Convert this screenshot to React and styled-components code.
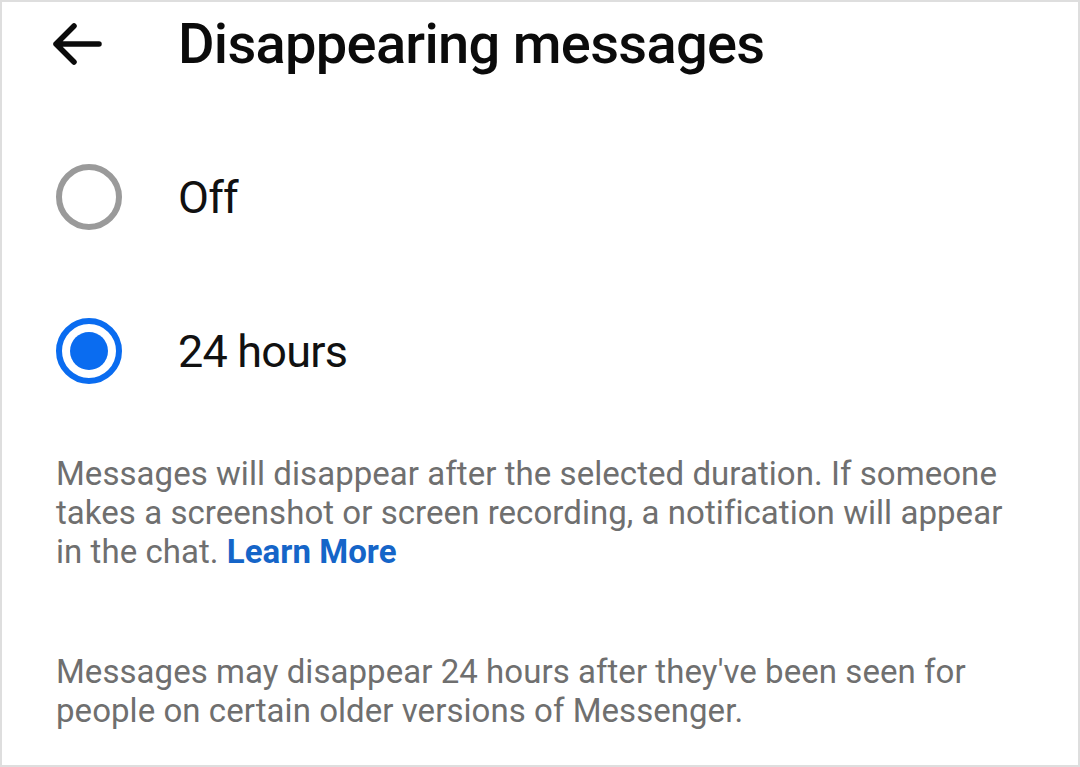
import styled, { createGlobalStyle } from 'styled-components';

const GlobalStyle = createGlobalStyle`
  html, body {
    margin: 0;
    padding: 0;
    background: #ffffff;
  }
  * {
    box-sizing: border-box;
  }
`;

const Screen = styled.div`
  width: 1080px;
  height: 767px;
  border: 2px solid #dedede;
  background: #ffffff;
  font-family: Roboto, 'Noto Sans', sans-serif;
  padding: 0 54px;
  overflow: hidden;
`;

const Header = styled.header`
  display: flex;
  align-items: center;
  height: 84px;
`;

const BackButton = styled.button`
  width: 122px;
  height: 84px;
  margin-left: -3px;
  padding: 0;
  border: none;
  background: transparent;
  display: flex;
  align-items: center;
  justify-content: flex-start;
  cursor: pointer;
`;

const Title = styled.h1`
  margin: 0 0 0 3px;
  font-size: 56px;
  font-weight: 500;
  color: #0b0b0b;
  letter-spacing: -0.7px;
`;

const Options = styled.div`
  display: flex;
  flex-direction: column;
  margin-top: 34px;
`;

const Option = styled.label`
  display: flex;
  align-items: center;
  height: 154px;
  cursor: pointer;
`;

const Radio = styled.span`
  width: 66px;
  height: 66px;
  border-radius: 50%;
  border: 6px solid ${({ $checked }) => ($checked ? '#0a6cf0' : '#9a9a9a')};
  display: flex;
  align-items: center;
  justify-content: center;
  margin-right: 56px;
  flex-shrink: 0;
  &::after {
    content: '';
    display: ${({ $checked }) => ($checked ? 'block' : 'none')};
    width: 38px;
    height: 38px;
    border-radius: 50%;
    background: #0a6cf0;
  }
`;

const OptionLabel = styled.span`
  font-size: 45px;
  letter-spacing: -0.8px;
  color: #111111;
`;

const Note = styled.p`
  margin: ${({ $top }) => $top} 0 0;
  font-size: 33px;
  line-height: 39px;
  letter-spacing: 0.05px;
  color: #6f6f6f;
`;

const LearnMore = styled.a`
  color: #1565c8;
  font-weight: 700;
  line-height: inherit;
  text-decoration: none;
`;

const BackArrow = () => (
  <svg width="52" height="46" viewBox="0 0 52 46" fill="none">
    <path
      d="M46 23H3M21 5L3 23l18 18"
      stroke="#0b0b0b"
      strokeWidth="5.5"
      strokeLinecap="round"
      strokeLinejoin="round"
    />
  </svg>
);

const App = () => {
  return (
    <>
      <GlobalStyle />
      <Screen>
        <Header>
          <BackButton type="button" aria-label="Back">
            <BackArrow />
          </BackButton>
          <Title>Disappearing messages</Title>
        </Header>
        <Options>
          <Option>
            <Radio />
            <OptionLabel>Off</OptionLabel>
          </Option>
          <Option>
            <Radio $checked />
            <OptionLabel>24 hours</OptionLabel>
          </Option>
        </Options>
        <Note $top="26px">
          Messages will disappear after the selected duration. If someone takes a screenshot or screen recording, a
          notification will appear in the chat. <LearnMore href="#">Learn More</LearnMore>
        </Note>
        <Note $top="81px">
          Messages may disappear 24 hours after they've been seen for people on certain older versions of Messenger.
        </Note>
      </Screen>
    </>
  );
};

export default App;
